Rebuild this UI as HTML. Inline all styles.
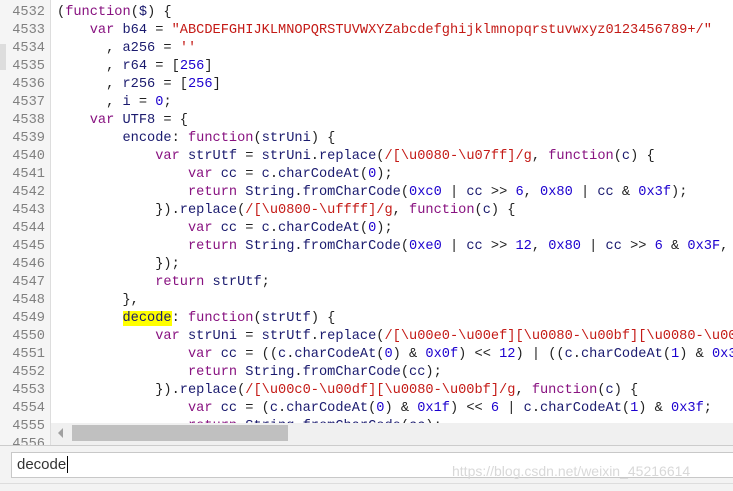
<!DOCTYPE html>
<html><head><style>
body{margin:0;width:733px;height:490px;overflow:hidden;background:#fff;position:relative;font-family:"Liberation Mono",monospace;}
.g{position:absolute;left:0;top:0;width:50px;height:445px;background:#f5f5f5;border-right:1px solid #ddd;}
.lb{position:absolute;left:0;top:44px;width:6px;height:26px;background:#ddd;}
.code{position:absolute;left:0;top:4px;width:733px;height:441px;overflow:hidden;}
.l{height:18px;line-height:18px;font-size:13.65px;white-space:pre;color:#222;overflow:hidden;}
.n{display:inline-block;width:45px;text-align:right;color:#808080;margin-right:12px;}
.k{color:#881280}.v{color:#1a1a6e}.s{color:#c41a16}.d{color:#1c00cf}
.hl{background:#ffff00}
.sb{position:absolute;left:51px;top:423px;width:682px;height:22px;background:#f0f0f0;}
.th{position:absolute;left:21px;top:2px;width:216px;height:16px;background:#c0c0c0;}
.ar{position:absolute;left:7px;top:5px;width:0;height:0;border-top:5px solid transparent;border-bottom:5px solid transparent;border-right:5px solid #a0a0a0;}
.sp{position:absolute;left:0;top:445px;width:733px;height:45px;background:#f3f3f3;border-top:1px solid #ccc;overflow:hidden;}
.in{position:absolute;left:11px;top:6px;width:722px;height:26px;box-sizing:border-box;background:#fff;border:1px solid #c8c8c8;border-right:none;font-family:"Liberation Sans",sans-serif;font-size:15px;line-height:24px;padding-left:5px;color:#333;}
.bl{position:absolute;left:0;top:37px;width:733px;height:1px;background:#ddd;}
.wm{position:absolute;left:452px;top:17px;font-family:"Liberation Sans",sans-serif;font-size:14px;color:#d8d8d8;white-space:nowrap;}
</style></head><body>
<div class="g"></div><div class="lb"></div>
<div class="code">
<div class="l"><span class="n">4532</span>(<span class="k">function</span>(<span class="v">$</span>) {</div>
<div class="l"><span class="n">4533</span>    <span class="k">var</span> <span class="v">b64</span> = <span class="s">"ABCDEFGHIJKLMNOPQRSTUVWXYZabcdefghijklmnopqrstuvwxyz0123456789+/"</span></div>
<div class="l"><span class="n">4534</span>      , <span class="v">a256</span> = <span class="s">''</span></div>
<div class="l"><span class="n">4535</span>      , <span class="v">r64</span> = [<span class="d">256</span>]</div>
<div class="l"><span class="n">4536</span>      , <span class="v">r256</span> = [<span class="d">256</span>]</div>
<div class="l"><span class="n">4537</span>      , <span class="v">i</span> = <span class="d">0</span>;</div>
<div class="l"><span class="n">4538</span>    <span class="k">var</span> <span class="v">UTF8</span> = {</div>
<div class="l"><span class="n">4539</span>        <span class="v">encode</span>: <span class="k">function</span>(<span class="v">strUni</span>) {</div>
<div class="l"><span class="n">4540</span>            <span class="k">var</span> <span class="v">strUtf</span> = <span class="v">strUni</span>.<span class="v">replace</span>(<span class="s">/[\u0080-\u07ff]/g</span>, <span class="k">function</span>(<span class="v">c</span>) {</div>
<div class="l"><span class="n">4541</span>                <span class="k">var</span> <span class="v">cc</span> = <span class="v">c</span>.<span class="v">charCodeAt</span>(<span class="d">0</span>);</div>
<div class="l"><span class="n">4542</span>                <span class="k">return</span> <span class="v">String</span>.<span class="v">fromCharCode</span>(<span class="d">0xc0</span> | <span class="v">cc</span> &gt;&gt; <span class="d">6</span>, <span class="d">0x80</span> | <span class="v">cc</span> &amp; <span class="d">0x3f</span>);</div>
<div class="l"><span class="n">4543</span>            }).<span class="v">replace</span>(<span class="s">/[\u0800-\uffff]/g</span>, <span class="k">function</span>(<span class="v">c</span>) {</div>
<div class="l"><span class="n">4544</span>                <span class="k">var</span> <span class="v">cc</span> = <span class="v">c</span>.<span class="v">charCodeAt</span>(<span class="d">0</span>);</div>
<div class="l"><span class="n">4545</span>                <span class="k">return</span> <span class="v">String</span>.<span class="v">fromCharCode</span>(<span class="d">0xe0</span> | <span class="v">cc</span> &gt;&gt; <span class="d">12</span>, <span class="d">0x80</span> | <span class="v">cc</span> &gt;&gt; <span class="d">6</span> &amp; <span class="d">0x3F</span>,</div>
<div class="l"><span class="n">4546</span>            });</div>
<div class="l"><span class="n">4547</span>            <span class="k">return</span> <span class="v">strUtf</span>;</div>
<div class="l"><span class="n">4548</span>        },</div>
<div class="l"><span class="n">4549</span>        <span class="v hl">decode</span>: <span class="k">function</span>(<span class="v">strUtf</span>) {</div>
<div class="l"><span class="n">4550</span>            <span class="k">var</span> <span class="v">strUni</span> = <span class="v">strUtf</span>.<span class="v">replace</span>(<span class="s">/[\u00e0-\u00ef][\u0080-\u00bf][\u0080-\u00bf]/g</span></div>
<div class="l"><span class="n">4551</span>                <span class="k">var</span> <span class="v">cc</span> = ((<span class="v">c</span>.<span class="v">charCodeAt</span>(<span class="d">0</span>) &amp; <span class="d">0x0f</span>) &lt;&lt; <span class="d">12</span>) | ((<span class="v">c</span>.<span class="v">charCodeAt</span>(<span class="d">1</span>) &amp; <span class="d">0x3f</span></div>
<div class="l"><span class="n">4552</span>                <span class="k">return</span> <span class="v">String</span>.<span class="v">fromCharCode</span>(<span class="v">cc</span>);</div>
<div class="l"><span class="n">4553</span>            }).<span class="v">replace</span>(<span class="s">/[\u00c0-\u00df][\u0080-\u00bf]/g</span>, <span class="k">function</span>(<span class="v">c</span>) {</div>
<div class="l"><span class="n">4554</span>                <span class="k">var</span> <span class="v">cc</span> = (<span class="v">c</span>.<span class="v">charCodeAt</span>(<span class="d">0</span>) &amp; <span class="d">0x1f</span>) &lt;&lt; <span class="d">6</span> | <span class="v">c</span>.<span class="v">charCodeAt</span>(<span class="d">1</span>) &amp; <span class="d">0x3f</span>;</div>
<div class="l"><span class="n">4555</span>                <span class="k">return</span> <span class="v">String</span>.<span class="v">fromCharCode</span>(<span class="v">cc</span>);</div>
<div class="l"><span class="n">4556</span>            });</div>
</div>
<div class="sb"><div class="ar"></div><div class="th"></div></div>
<div class="sp"><div class="in">decode<span style="border-left:1px solid #000;margin-left:1px"></span></div><div class="wm">https://blog.csdn.net/weixin_45216614</div><div class="bl"></div></div>
</body></html>
